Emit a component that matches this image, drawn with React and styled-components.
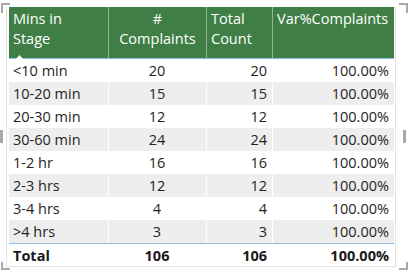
import React from "react";
import styled, { createGlobalStyle } from "styled-components";

const Global = createGlobalStyle`
  html, body { margin: 0; padding: 0; background: #ffffff; }
  body { font-family: "Segoe UI", "Open Sans", sans-serif; }
`;

const Stage = styled.div`
  position: relative;
  width: 410px;
  height: 275px;
  padding-top: 7px;
  box-sizing: border-box;
`;

const Visual = styled.div`
  margin-left: 6px;
  width: 390px;
  height: 260px;
  box-sizing: border-box;
  border-left: 1px solid #e3e3e3;
  border-right: 1px solid #e3e3e3;
  border-bottom: 1px solid #e3e3e3;
  padding: 0 1px 0 2px;
`;

const Grid = styled.div`
  display: flex;
  flex-direction: column;
  width: 385px;
  font-size: 14.5px;
  color: #252423;
`;

const HeaderRow = styled.div`
  display: grid;
  grid-template-columns: 99px 98px 66px 122px;
  height: 52px;
  background: #3f7f46;
  border-bottom: 1px solid #8fbde6;
  box-sizing: border-box;
`;

const HeadCell = styled.div`
  box-sizing: border-box;
  padding: 2px 4px 0 4px;
  color: #ffffff;
  line-height: 20px;
  white-space: nowrap;
  border-left: ${(p) => (p.$first ? "none" : "1px solid #93b597")};
  display: flex;
  flex-direction: column;
  align-items: ${(p) => (p.$align === "center" ? "center" : "flex-start")};
`;

const SortArrow = styled.svg`
  margin-top: 6px;
  margin-left: 2px;
  display: block;
`;

const Row = styled.div`
  display: grid;
  grid-template-columns: 99px 98px 66px 122px;
  height: 23px;
  background: ${(p) => (p.$striped ? "#eeeeee" : "#ffffff")};
`;

const Cell = styled.div`
  box-sizing: border-box;
  padding: 0 5px 0 4px;
  line-height: 23px;
  white-space: nowrap;
  text-align: ${(p) => p.$align || "left"};
  border-left: ${(p) => (p.$first ? "none" : "1px solid #ffffff")};
`;

const TotalRow = styled.div`
  display: grid;
  grid-template-columns: 99px 98px 66px 122px;
  height: 24px;
  border-top: 1px solid #8fbde6;
  box-sizing: border-box;
  font-weight: 700;
  color: #1a1a1a;
`;

const Mark = styled.div`
  position: absolute;
  background: #a8a8a8;
`;

const Handle = styled.div`
  position: absolute;
  top: 130px;
  width: 3px;
  height: 13px;
  background: #a8a8a8;
`;

const rows = [
  ["<10 min", 20, 20],
  ["10-20 min", 15, 15],
  ["20-30 min", 12, 12],
  ["30-60 min", 24, 24],
  ["1-2 hr", 16, 16],
  ["2-3 hrs", 12, 12],
  ["3-4 hrs", 4, 4],
  [">4 hrs", 3, 3],
];

export default function App() {
  return (
    <>
      <Global />
      <Stage>
        <Visual>
          <Grid>
            <HeaderRow>
              <HeadCell $first>
                <span>Mins in</span>
                <span>Stage</span>
                <SortArrow width="9" height="5" viewBox="0 0 9 5">
                  <polygon points="0,5 4.5,0 9,5" fill="#ffffff" />
                </SortArrow>
              </HeadCell>
              <HeadCell $align="center">
                <span>#</span>
                <span>Complaints</span>
              </HeadCell>
              <HeadCell>
                <span>Total</span>
                <span>Count</span>
              </HeadCell>
              <HeadCell>
                <span>Var%Complaints</span>
              </HeadCell>
            </HeaderRow>
            {rows.map((r, i) => (
              <Row key={r[0]} $striped={i % 2 === 1}>
                <Cell $first>{r[0]}</Cell>
                <Cell $align="center">{r[1]}</Cell>
                <Cell $align="right">{r[2]}</Cell>
                <Cell $align="right">100.00%</Cell>
              </Row>
            ))}
            <TotalRow>
              <Cell $first>Total</Cell>
              <Cell $align="center">106</Cell>
              <Cell $align="right">106</Cell>
              <Cell $align="right">100.00%</Cell>
            </TotalRow>
          </Grid>
        </Visual>
        <Mark style={{ left: 1, top: 3, width: 9, height: 2 }} />
        <Mark style={{ left: 1, top: 3, width: 2, height: 10 }} />
        <Mark style={{ left: 399, top: 3, width: 9, height: 2 }} />
        <Mark style={{ left: 406, top: 3, width: 2, height: 10 }} />
        <Mark style={{ left: 1, top: 268, width: 9, height: 2 }} />
        <Mark style={{ left: 1, top: 262, width: 2, height: 8 }} />
        <Mark style={{ left: 399, top: 268, width: 9, height: 2 }} />
        <Mark style={{ left: 406, top: 262, width: 2, height: 8 }} />
        <Handle style={{ left: 0 }} />
        <Handle style={{ left: 403 }} />
      </Stage>
    </>
  );
}
